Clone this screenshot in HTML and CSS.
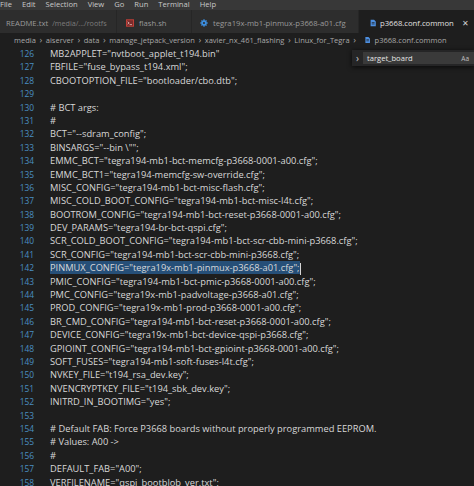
FILE: index.html
```html
<!DOCTYPE html>
<html>
<head>
<meta charset="utf-8">
<link rel="stylesheet" href="styles.css">
</head>
<body>
<div class="app">
  <div class="menubar">
    <span class="mi">File</span><span class="mi">Edit</span><span class="mi">Selection</span><span class="mi">View</span><span class="mi">Go</span><span class="mi">Run</span><span class="mi">Terminal</span><span class="mi">Help</span>
  </div>
  <div class="tabs">
    <div class="tab t1"><span class="tl">README.txt</span><span class="td">/media/.../rootfs</span></div>
    <div class="tab t2"><svg class="ti" viewBox="0 0 10 10"><rect x="0.5" y="1" width="9" height="8" fill="#7a2b2b" stroke="#d8433a" stroke-width="1"/><path d="M2 3.5 L4 5 L2 6.5" stroke="#f0d0c8" stroke-width="0.9" fill="none"/><path d="M4.5 7 H7.5" stroke="#f0d0c8" stroke-width="0.9"/></svg><span class="tl">flash.sh</span></div>
    <div class="tab t3"><svg class="ti" viewBox="0 0 10 10"><g fill="#3d8fe0"><circle cx="5" cy="5" r="3"/><rect x="4" y="0.5" width="2" height="9"/><rect x="0.5" y="4" width="9" height="2"/><rect x="4" y="0.5" width="2" height="9" transform="rotate(45 5 5)"/><rect x="4" y="0.5" width="2" height="9" transform="rotate(-45 5 5)"/></g><circle cx="5" cy="5" r="1.3" fill="#2d2d2d"/></svg><span class="tl">tegra19x-mb1-pinmux-p3668-a01.cfg</span></div>
    <div class="tab t4 active"><svg class="ti" viewBox="0 0 10 10"><path d="M2 0.8 H6.3 L8.5 3 V9.2 H2 Z" fill="#4d8fe0"/><path d="M3.4 4.5 H7 M3.4 6.2 H7" stroke="#1e1e1e" stroke-width="0.9"/></svg><span class="tl">p3668.conf.common</span><span class="close">✕</span></div>
  </div>
  <div class="crumbs">
    <span>media</span><span class="sep">›</span><span>aiserver</span><span class="sep">›</span><span>data</span><span class="sep">›</span><span>manage_jetpack_version</span><span class="sep">›</span><span>xavier_nx_461_flashing</span><span class="sep">›</span><span>Linux_for_Tegra</span><span class="sep">›</span><svg class="ci" viewBox="0 0 10 10"><path d="M2 0.8 H6.3 L8.5 3 V9.2 H2 Z" fill="#4d8fe0"/><path d="M3.4 4.5 H7 M3.4 6.2 H7" stroke="#1e1e1e" stroke-width="0.9"/></svg><span>p3668.conf.common</span>
  </div>
  <div class="editor">
    <div class="lines">
      <div class="ln">126</div><div class="tx">MB2APPLET="nvtboot_applet_t194.bin"</div>
      <div class="ln">127</div><div class="tx">FBFILE="fuse_bypass_t194.xml";</div>
      <div class="ln">128</div><div class="tx">CBOOTOPTION_FILE="bootloader/cbo.dtb";</div>
      <div class="ln">129</div><div class="tx"></div>
      <div class="ln">130</div><div class="tx"># BCT args:</div>
      <div class="ln">131</div><div class="tx">#</div>
      <div class="ln">132</div><div class="tx">BCT="--sdram_config";</div>
      <div class="ln">133</div><div class="tx">BINSARGS="--bin \"";</div>
      <div class="ln">134</div><div class="tx">EMMC_BCT="tegra194-mb1-bct-memcfg-p3668-0001-a00.cfg";</div>
      <div class="ln">135</div><div class="tx">EMMC_BCT1="tegra194-memcfg-sw-override.cfg";</div>
      <div class="ln">136</div><div class="tx">MISC_CONFIG="tegra194-mb1-bct-misc-flash.cfg";</div>
      <div class="ln">137</div><div class="tx">MISC_COLD_BOOT_CONFIG="tegra194-mb1-bct-misc-l4t.cfg";</div>
      <div class="ln">138</div><div class="tx">BOOTROM_CONFIG="tegra194-mb1-bct-reset-p3668-0001-a00.cfg";</div>
      <div class="ln">139</div><div class="tx">DEV_PARAMS="tegra194-br-bct-qspi.cfg";</div>
      <div class="ln">140</div><div class="tx">SCR_COLD_BOOT_CONFIG="tegra194-mb1-bct-scr-cbb-mini-p3668.cfg";</div>
      <div class="ln">141</div><div class="tx">SCR_CONFIG="tegra194-mb1-bct-scr-cbb-mini-p3668.cfg";</div>
      <div class="ln">142</div><div class="tx"><span class="sel">PINMUX_CONFIG="tegra19x-mb1-pinmux-p3668-a01.cfg";</span><span class="cur"></span></div>
      <div class="ln">143</div><div class="tx">PMIC_CONFIG="tegra194-mb1-bct-pmic-p3668-0001-a00.cfg";</div>
      <div class="ln">144</div><div class="tx">PMC_CONFIG="tegra19x-mb1-padvoltage-p3668-a01.cfg";</div>
      <div class="ln">145</div><div class="tx">PROD_CONFIG="tegra19x-mb1-prod-p3668-0001-a00.cfg";</div>
      <div class="ln">146</div><div class="tx">BR_CMD_CONFIG="tegra194-mb1-bct-reset-p3668-0001-a00.cfg";</div>
      <div class="ln">147</div><div class="tx">DEVICE_CONFIG="tegra19x-mb1-bct-device-qspi-p3668.cfg";</div>
      <div class="ln">148</div><div class="tx">GPIOINT_CONFIG="tegra194-mb1-bct-gpioint-p3668-0001-a00.cfg";</div>
      <div class="ln">149</div><div class="tx">SOFT_FUSES="tegra194-mb1-soft-fuses-l4t.cfg";</div>
      <div class="ln">150</div><div class="tx">NVKEY_FILE="t194_rsa_dev.key";</div>
      <div class="ln">151</div><div class="tx">NVENCRYPTKEY_FILE="t194_sbk_dev.key";</div>
      <div class="ln">152</div><div class="tx">INITRD_IN_BOOTIMG="yes";</div>
      <div class="ln">153</div><div class="tx"></div>
      <div class="ln">154</div><div class="tx"># Default FAB: Force P3668 boards without properly programmed EEPROM.</div>
      <div class="ln">155</div><div class="tx"># Values: A00 -&gt;</div>
      <div class="ln">156</div><div class="tx">#</div>
      <div class="ln">157</div><div class="tx">DEFAULT_FAB="A00";</div>
      <div class="ln">158</div><div class="tx">VERFILENAME="qspi_bootblob_ver.txt";</div>
    </div>
    <div class="find">
      <span class="toggle">›</span>
      <div class="input"><span class="q">target_board</span><span class="aa">Aa</span></div>
    </div>
  </div>
</div>
</body>
</html>
```
FILE: styles.css
```css
html, body {
  margin: 0;
  padding: 0;
  background: #1e1e1e;
  overflow: hidden;
}
.app {
  width: 474px;
  height: 486px;
  overflow: hidden;
  font-family: "Open Sans", "Noto Sans", sans-serif;
  color: #cccccc;
}
.menubar {
  height: 10px;
  background: #383838;
  display: flex;
  gap: 10px;
  overflow: hidden;
  font-size: 7.6px;
  line-height: 10px;
}
.mi {
  margin-top: -1px;
  color: #c8c8c8;
}
.tabs {
  height: 23px;
  background: #2a2a2a;
  display: flex;
  font-size: 7.7px;
}
.tab {
  flex: none;
  display: flex;
  align-items: center;
  box-sizing: border-box;
  padding-top: 2px;
  padding-left: 7px;
  background: #2d2d2d;
  border-right: 1px solid #262626;
  color: #9a9a9a;
  white-space: nowrap;
  overflow: hidden;
}
.t1 { width: 117px; padding-left: 6px; }
.t2 { width: 75px; padding-left: 9px; }
.t3 { width: 167px; padding-left: 8px; }
.t4 { flex: 1; padding-left: 10px; border-right: none; }
.tab.active { background: #1e1e1e; color: #e0e0e0; }
.td { font-size: 7.2px; color: #7c7c7c; margin-left: 4px; }
.ti { width: 8px; height: 8px; margin-right: 5px; flex: none; }
.t4 .ti { margin-right: 3px; }
.close { margin-left: 8px; font-size: 7.5px; color: #d0d0d0; }
.crumbs {
  height: 14px;
  display: flex;
  align-items: center;
  padding-left: 14px;
  font-size: 7.5px;
  color: #a8a8a8;
  white-space: nowrap;
}
.sep {
  width: 10px;
  text-align: center;
  color: #a0a0a0;
  font-size: 9px;
  line-height: 10px;
}
.ci { width: 7px; height: 8px; margin: 0 4px 0 4px; }
.editor {
  position: relative;
}
.lines {
  display: grid;
  grid-template-columns: 34px 1fr;
  grid-auto-rows: 13.4px;
  line-height: 13.4px;
}
.ln {
  text-align: right;
  color: #4a8fc2;
  font-size: 8.4px;
}
.tx {
  padding-left: 16px;
  font-size: 9.3px;
  color: #d8d8d8;
  white-space: pre;
}
.sel { background: #264f78; }
.cur {
  display: inline-block;
  width: 1px;
  height: 12px;
  background: #d6d6d6;
  vertical-align: middle;
}
.find {
  position: absolute;
  left: 352px;
  top: 3px;
  width: 122px;
  height: 16px;
  background: #252526;
  box-shadow: 0 1px 5px rgba(0,0,0,0.75);
  display: flex;
  align-items: center;
}
.toggle {
  width: 11px;
  text-align: center;
  color: #c8c8c8;
  font-size: 10px;
  line-height: 10px;
}
.input {
  flex: 1;
  height: 12px;
  display: flex;
  align-items: center;
  background: #3a3a3a;
  padding-left: 4px;
  font-size: 7.6px;
  color: #e6e6e6;
}
.q { flex: 1; }
.aa { font-size: 6.5px; margin-right: 5px; color: #c0c0c0; }
```
